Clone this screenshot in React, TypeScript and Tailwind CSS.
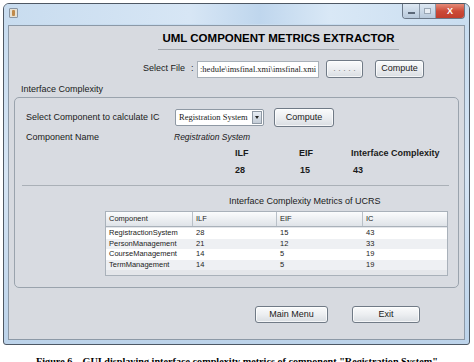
import React from 'react'

const rows = [
  ['RegistractionSystem', '28', '15', '43'],
  ['PersonManagement', '21', '12', '33'],
  ['CourseManagement', '14', '5', '19'],
  ['TermManagement', '14', '5', '19'],
]

function JButton({ label, className = '' }: { label: string; className?: string }) {
  return (
    <div
      className={`flex items-center justify-center rounded-[3px] border border-[#707a86] bg-gradient-to-b from-[#fafbfc] via-[#eceef1] to-[#d9dde2] text-[9px] text-[#1a1a1a] whitespace-nowrap shadow-[inset_0_0_0_1px_rgba(255,255,255,0.7)] ${className}`}
    >
      {label}
    </div>
  )
}

export default function App() {
  return (
    <div
      className="relative w-[474px] h-[362px] overflow-hidden bg-white"
      style={{ fontFamily: '"Liberation Sans", Arial, sans-serif' }}
    >
      {/* window frame */}
      <div className="ml-[3px] mt-[3px] w-[467px] h-[342px] rounded-t-[6px] rounded-b-[3px] border border-[#4e5864] bg-gradient-to-b from-[#c6dbef] via-[#d6e5f4] to-[#bcd3ea] flex flex-col">
        {/* title bar */}
        <div className="h-[20px] flex items-start justify-between pl-[5px] pr-[4px] bg-[linear-gradient(90deg,#c8dcef_0%,#d7e6f5_40%,#bfd6ed_55%,#d9e8f6_70%,#c9ddf0_100%)] rounded-t-[5px]">
          <div className="mt-[4px] w-[9px] h-[10px] rounded-[1px] border border-[#8a96a3] bg-[#e7e1d3] flex items-center justify-center">
            <div className="w-[3px] h-[6px] bg-[#c08a4a] rounded-[1px]" />
          </div>
          <div className="flex h-[15px] rounded-b-[4px] border border-t-0 border-[#6b7888] overflow-hidden">
            <div className="w-[17px] bg-gradient-to-b from-[#dde8f3] to-[#b8c9db] border-r border-[#8a98a8] flex items-center justify-center">
              <div className="w-[7px] h-[2px] bg-[#f4f7fa] border border-[#5b6878] mt-[3px]" />
            </div>
            <div className="w-[16px] bg-gradient-to-b from-[#dde8f3] to-[#b8c9db] border-r border-[#8a98a8] flex items-center justify-center">
              <div className="w-[7px] h-[6px] border border-[#9aa7b5] bg-[#e8eef4]" />
            </div>
            <div className="w-[28px] bg-gradient-to-b from-[#e58a78] via-[#cc4a38] to-[#c13d2c] flex items-center justify-center text-[9px] font-bold text-white leading-none">
              X
            </div>
          </div>
        </div>

        {/* client area */}
        <div className="mx-[4px] mt-[1px] mb-[4px] flex-1 border border-[#8c99a7] bg-[#d7dae0] flex flex-col text-[9px] text-[#1a1a1a]">
          {/* heading */}
          <div className="pl-[149px] pt-[5px]">
            <div className="w-[241px] text-center text-[11.5px] font-bold leading-[14px] text-black whitespace-nowrap">
              UML COMPONENT METRICS EXTRACTOR
            </div>
            <div className="mt-[4px] w-[241px] h-px bg-[#a3a8ae]" />
          </div>

          {/* file row */}
          <div className="mt-[10px] flex items-center h-[18px] pl-[134px] whitespace-nowrap">
            <span className="w-[48px]">Select File</span>
            <span className="w-[6px]">:</span>
            <div
              className="w-[122px] h-[17px] bg-white border border-[#a8b0b8] flex items-center pl-[2px] text-[8.5px] overflow-hidden whitespace-nowrap"
              style={{ fontFamily: '"Liberation Serif", "Times New Roman", serif' }}
            >
              :hedule\imsfinal.xmi\imsfinal.xmi
            </div>
            <JButton label=". . . . ." className="ml-[7px] w-[37px] h-[18px] !text-[#8a8a8a]" />
            <JButton label="Compute" className="ml-[12px] w-[49px] h-[18px]" />
          </div>

          {/* group label */}
          <div className="mt-[5px] pl-[12px] leading-[12px]">Interface Complexity</div>

          {/* group panel */}
          <div className="ml-[5px] mt-[2px] w-[445px] h-[191px] rounded-[5px] border border-[#9aa3ad] bg-[#d8dbe1] flex flex-col">
            <div className="mt-[10px] flex items-center h-[19px] pl-[11px] whitespace-nowrap">
              <span className="w-[149px]">Select Component to calculate IC</span>
              <div
                className="w-[89px] h-[17px] bg-white border border-[#8f99a4] flex items-center justify-between pl-[3px] text-[8.5px] rounded-[2px]"
                style={{ fontFamily: '"Liberation Serif", "Times New Roman", serif' }}
              >
                <span>Registration System</span>
                <div className="w-[10px] h-[13px] mr-[1px] bg-gradient-to-b from-[#e8edf3] to-[#c3ccd6] border border-[#8f99a4] flex items-center justify-center">
                  <div className="w-0 h-0 border-l-[2.5px] border-r-[2.5px] border-t-[3px] border-l-transparent border-r-transparent border-t-[#222]" />
                </div>
              </div>
              <JButton label="Compute" className="ml-[10px] w-[60px] h-[19px]" />
            </div>

            <div className="mt-[4px] flex items-center h-[13px] pl-[11px] whitespace-nowrap">
              <span className="w-[148px]">Component Name</span>
              <span className="italic text-[8.5px]">Registration System</span>
            </div>

            <div className="mt-[3px] flex items-center h-[13px] pl-[220px] font-bold whitespace-nowrap">
              <span className="w-[64px]">ILF</span>
              <span className="w-[52px]">EIF</span>
              <span>Interface Complexity</span>
            </div>
            <div className="mt-[4px] flex items-center h-[13px] pl-[220px] font-bold">
              <span className="w-[65px]">28</span>
              <span className="w-[53px]">15</span>
              <span>43</span>
            </div>

            <div className="mt-[8px] ml-[7px] w-[427px] h-px bg-[#aab0b7]" />

            <div className="mt-[9px] pl-[214px] h-[12px] leading-[12px] whitespace-nowrap">
              Interface Complexity Metrics of UCRS
            </div>

            {/* table */}
            <div className="mt-[4px] ml-[90px] w-[343px] h-[65px] border border-[#a9b1ba] bg-[#e4e6ea] flex flex-col text-[7.5px] text-[#222]">
              <div className="grid grid-cols-[87px_84px_86px_84px] h-[15px] bg-gradient-to-b from-[#fbfcfd] to-[#dfe3e8] border-b border-[#a9b1ba]">
                {['Component', 'ILF', 'EIF', 'IC'].map((h) => (
                  <div key={h} className="flex items-center pl-[3px] border-r border-[#b9c0c8] last:border-r-0">
                    {h}
                  </div>
                ))}
              </div>
              <div className="mt-[1px] flex flex-col">
                {rows.map((r, i) => (
                  <div
                    key={r[0]}
                    className={`grid grid-cols-[87px_84px_86px_84px] h-[10.5px] leading-[10.5px] ${
                      i % 2 === 0 ? 'bg-white' : 'bg-[#eef0f3]'
                    }`}
                  >
                    {r.map((c, j) => (
                      <div key={j} className="pl-[3px] whitespace-nowrap">
                        {c}
                      </div>
                    ))}
                  </div>
                ))}
              </div>
            </div>
          </div>

          {/* bottom buttons */}
          <div className="mt-[18px] flex pl-[246px]">
            <JButton label="Main Menu" className="w-[73px] h-[17px]" />
            <JButton label="Exit" className="ml-[24px] w-[68px] h-[17px]" />
          </div>
        </div>
      </div>

      {/* figure caption */}
      <div
        className="mt-[10px] pl-[36px] text-[10.2px] font-bold leading-[14px] text-black whitespace-nowrap"
        style={{ fontFamily: '"Liberation Serif", "Times New Roman", serif' }}
      >
        Figure 6.&nbsp;&nbsp; GUI displaying interface complexity metrics of component "Registration System"
      </div>
    </div>
  )
}
